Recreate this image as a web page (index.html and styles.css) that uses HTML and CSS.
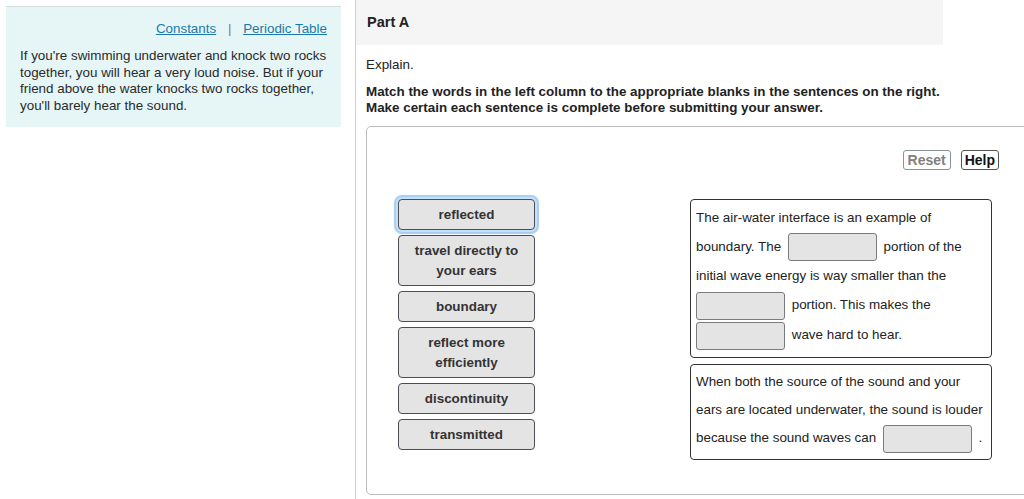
FILE: index.html
```html
<!DOCTYPE html>
<html>
<head>
<meta charset="utf-8">
<link rel="stylesheet" href="styles.css">
</head>
<body>
<div class="page">
  <aside class="side">
    <div class="intro">
      <div class="links">
        <a href="#" class="link">Constants</a>
        <span class="sep">|</span>
        <a href="#" class="link">Periodic Table</a>
      </div>
      <p class="intro-text">If you're swimming underwater and knock two rocks together, you will hear a very loud noise. But if your friend above the water knocks two rocks together, you'll barely hear the sound.</p>
    </div>
  </aside>
  <main class="main">
    <div class="part-head">Part A</div>
    <div class="content">
      <p class="explain">Explain.</p>
      <p class="instr">Match the words in the left column to the appropriate blanks in the sentences on the right.<br>Make certain each sentence is complete before submitting your answer.</p>
      <div class="widget">
        <div class="board">
          <div class="toolbar">
            <button class="tbtn tbtn-off">Reset</button>
            <button class="tbtn">Help</button>
          </div>
          <div class="match">
            <div class="words">
              <div class="word word-focus">reflected</div>
              <div class="word">travel directly to<br>your ears</div>
              <div class="word">boundary</div>
              <div class="word">reflect more<br>efficiently</div>
              <div class="word">discontinuity</div>
              <div class="word">transmitted</div>
            </div>
            <div class="sentences">
              <div class="sentence sentence-one">The air-water interface is an example of<br>boundary. The <span class="blank"></span> portion of the<br>initial wave energy is way smaller than the<br><span class="blank blank-first"></span> portion. This makes the<br><span class="blank blank-first blank-tight"></span> wave hard to hear.</div>
              <div class="sentence sentence-two">When both the source of the sound and your<br>ears are located underwater, the sound is louder<br>because the sound waves can <span class="blank"></span> .</div>
            </div>
          </div>
        </div>
      </div>
    </div>
  </main>
</div>
</body>
</html>
```

FILE: styles.css
```css
html, body {
  margin: 0;
  padding: 0;
  height: 100%;
  overflow: hidden;
  background: #fff;
}
body {
  font-family: "Liberation Sans", Arial, sans-serif;
  font-size: 13.4px;
  color: #222;
}
.page {
  display: flex;
  min-height: 100vh;
}
.side {
  width: 355px;
  flex: none;
}
.intro {
  margin: 6px 0 0 6px;
  width: 335px;
  box-sizing: border-box;
  background: #e6f6f7;
  border-top: 1px solid #d3dcde;
  padding: 14px 14px 13px 14px;
}
.links {
  text-align: right;
  line-height: 16px;
}
.link {
  color: #1b7aa8;
  text-decoration: underline;
}
.sep {
  color: #777;
  margin: 0 8px;
}
.intro-text {
  margin: 11px 0 0 0;
  line-height: 16.5px;
  color: #2a2a2a;
}
.main {
  flex: 1;
  border-left: 1px solid #cfcfcf;
  min-height: 100vh;
  overflow: hidden;
}
.part-head {
  width: 587px;
  height: 45px;
  box-sizing: border-box;
  background: #f5f5f5;
  padding: 14px 0 0 11px;
  font-weight: bold;
  font-size: 14.5px;
  line-height: 16px;
  color: #222;
}
.content {
  padding-left: 10px;
}
.explain {
  margin: 12px 0 0 0;
  line-height: 16px;
}
.instr {
  margin: 11px 0 0 0;
  font-weight: bold;
  line-height: 16px;
  color: #222;
}
.widget {
  margin-top: 10px;
  width: 690px;
  height: 369px;
  box-sizing: border-box;
  border: 1px solid #bdbdbd;
  border-radius: 5px;
  padding: 23px 0 0 31px;
}
.board {
  width: 601px;
}
.toolbar {
  display: flex;
  justify-content: flex-end;
  gap: 10px;
  height: 20px;
  margin-bottom: 29px;
}
.tbtn {
  font-family: "Liberation Sans", Arial, sans-serif;
  font-weight: bold;
  font-size: 14px;
  line-height: 18px;
  height: 20px;
  padding: 0 3px;
  background: #fff;
  border: 1px solid #555;
  border-radius: 3px;
  color: #111;
}
.tbtn-off {
  color: #808080;
  border-color: #8a9396;
  padding: 0 4px;
}
.match {
  display: flex;
  align-items: flex-start;
}
.words {
  width: 137px;
  display: flex;
  flex-direction: column;
  gap: 5px;
}
.word {
  box-sizing: border-box;
  background: #e4e4e4;
  border: 1px solid #4d4d55;
  border-radius: 4px;
  padding: 4.5px 4px;
  line-height: 20px;
  text-align: center;
  font-weight: bold;
  color: #333;
}
.word-focus {
  box-shadow: 0 0 0 2px #c4e0fa, 0 0 1px 4px #a6cdf2;
}
.sentences {
  width: 302px;
  margin-left: auto;
  margin-right: 7px;
  display: flex;
  flex-direction: column;
  gap: 6px;
}
.sentence {
  box-sizing: border-box;
  border: 1px solid #333;
  border-radius: 4px;
  padding: 3px 2px 6px 5px;
  line-height: 29px;
  white-space: nowrap;
  color: #222;
}
.sentence-one {
  padding-bottom: 7px;
}
.sentence-two {
  line-height: 28px;
}
.blank {
  display: inline-block;
  box-sizing: border-box;
  width: 89px;
  height: 28px;
  vertical-align: middle;
  background: #e4e4e4;
  border: 1px solid #7b7b7b;
  border-radius: 3px;
  margin: 0 3px;
}
.blank-first {
  margin-left: 0;
}
.blank-tight {
  margin-top: 2px;
}
```
